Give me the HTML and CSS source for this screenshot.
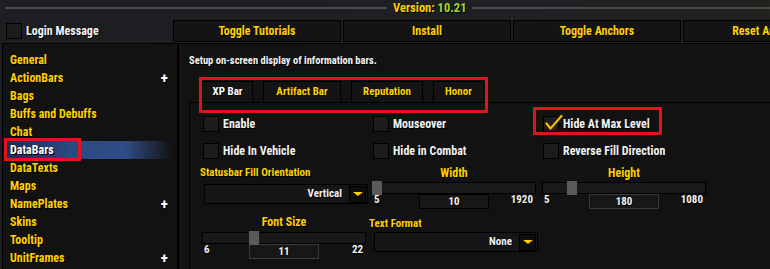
FILE: index.html
```html
<!DOCTYPE html>
<html>
<head>
<meta charset="utf-8">
<link rel="stylesheet" href="styles.css">
</head>
<body>
<div class="titlebar">
  <span class="tline tline-left"></span>
  <span class="version">Version: <span class="ver-num">10.21</span></span>
  <span class="tline tline-right"></span>
</div>
<div class="toolbar">
  <div class="login"><span class="cb"></span><span>Login Message</span></div>
  <div class="btn">Toggle Tutorials</div>
  <div class="btn">Install</div>
  <div class="btn">Toggle Anchors</div>
  <div class="btn">Reset Anchors</div>
</div>
<div class="main">
  <nav class="sidebar">
    <div class="nav-item">General</div>
    <div class="nav-item">ActionBars<span class="plus">+</span></div>
    <div class="nav-item">Bags</div>
    <div class="nav-item">Buffs and Debuffs</div>
    <div class="nav-item">Chat</div>
    <div class="nav-item active">DataBars<span class="redbox redbox-nav"></span></div>
    <div class="nav-item">DataTexts</div>
    <div class="nav-item">Maps</div>
    <div class="nav-item">NamePlates<span class="plus">+</span></div>
    <div class="nav-item">Skins</div>
    <div class="nav-item">Tooltip</div>
    <div class="nav-item">UnitFrames<span class="plus">+</span></div>
  </nav>
  <section class="content">
    <div class="desc">Setup on-screen display of information bars.</div>
    <div class="tabs">
      <div class="tab tab-xp selected">XP Bar</div>
      <div class="tab tab-artifact">Artifact Bar</div>
      <div class="tab tab-rep">Reputation</div>
      <div class="tab tab-honor">Honor</div>
      <span class="redbox redbox-tabs"></span>
    </div>
    <div class="panel">
      <div class="checks">
        <div class="check"><span class="cb"></span>Enable</div>
        <div class="check"><span class="cb"></span>Mouseover</div>
        <div class="check"><span class="cb checked"><svg class="tick" viewBox="0 0 20 18" width="20" height="18"><path d="M2.5 8.5 L6.5 13.5 L17.5 1" fill="none" stroke="#5a4600" stroke-width="3.2" stroke-linecap="round" stroke-linejoin="round"/><path d="M2.5 8.5 L6.5 13.5 L17.5 1" fill="none" stroke="#ffd100" stroke-width="1.8" stroke-linecap="round" stroke-linejoin="round"/></svg></span>Hide At Max Level<span class="redbox redbox-max"></span></div>
        <div class="check"><span class="cb"></span>Hide In Vehicle</div>
        <div class="check"><span class="cb"></span>Hide in Combat</div>
        <div class="check"><span class="cb"></span>Reverse Fill Direction</div>
      </div>
      <div class="widgets row3">
        <div class="dd-widget">
          <div class="glabel">Statusbar Fill Orientation</div>
          <div class="dropdown"><span>Vertical</span><span class="dd-btn"><span class="arrow"></span></span></div>
        </div>
        <div class="slider">
          <div class="slabel">Width</div>
          <div class="track"><span class="thumb" style="left:-1px"></span></div>
          <div class="svals"><span class="smin">5</span><span class="sbox">10</span><span class="smax">1920</span></div>
        </div>
        <div class="slider">
          <div class="slabel">Height</div>
          <div class="track"><span class="thumb" style="left:24px"></span></div>
          <div class="svals"><span class="smin">5</span><span class="sbox hl">180</span><span class="smax">1080</span></div>
        </div>
      </div>
      <div class="widgets row4">
        <div class="slider">
          <div class="slabel">Font Size</div>
          <div class="track"><span class="thumb" style="left:46px"></span></div>
          <div class="svals"><span class="smin">6</span><span class="sbox hl">11</span><span class="smax">22</span></div>
        </div>
        <div class="dd-widget tf">
          <div class="glabel">Text Format</div>
          <div class="dropdown"><span>None</span><span class="dd-btn"><span class="arrow"></span></span></div>
        </div>
      </div>
    </div>
  </section>
</div>
</body>
</html>
```
FILE: styles.css
```css
* { box-sizing: border-box; }
html, body { margin: 0; padding: 0; }
body {
  width: 770px;
  height: 269px;
  overflow: hidden;
  background: linear-gradient(90deg, #1c1e21 0%, #1e2023 70%, #24221f 100%);
  font-family: "Roboto", "Open Sans", "DejaVu Sans Condensed", sans-serif;
  font-stretch: 75%;
  font-weight: 700;
  font-size: 12px;
  line-height: 14px;
  color: #f2f2f2;
  text-shadow: 1px 1px 0 #000;
}

.titlebar {
  height: 16px;
  display: flex;
  align-items: center;
  padding-left: 5px;
}
.tline { height: 2px; background: #4a4b4e; }
.tline-left { width: 382px; flex: none; }
.tline-right { flex: 1; }
.version { margin: 0 6px; color: #ffd100; white-space: nowrap; font-size: 12.5px; }
.ver-num { color: #9ddc2a; }

.toolbar {
  display: flex;
  height: 22px;
  margin-top: 4px;
  padding-left: 6px;
  overflow: hidden;
}
.login {
  width: 167px;
  flex: none;
  display: flex;
  align-items: center;
  gap: 4px;
  color: #f2f2f2;
  font-size: 12px;
}
.cb {
  width: 16px;
  height: 16px;
  flex: none;
  background: #1c1c1c;
  border: 1px solid #000;
  position: relative;
}
.btn {
  width: 168px;
  height: 22px;
  flex: none;
  margin-right: 2px;
  background: #141414;
  border: 1px solid #000;
  color: #ffd100;
  font-size: 12px;
  display: flex;
  align-items: center;
  justify-content: center;
  white-space: nowrap;
}

.main {
  display: flex;
  margin-top: 1px;
  height: 230px;
}
.sidebar {
  margin-left: 2px;
  width: 176px;
  flex: none;
  border: 1px solid #000;
  background: #121212;
  padding-top: 7px;
}
.nav-item {
  position: relative;
  height: 18px;
  margin-left: 1px;
  padding: 0 9px 0 6px;
  display: flex;
  align-items: center;
  justify-content: space-between;
  color: #ffd100;
  font-size: 12px;
}
.nav-item.active {
  color: #fff;
  background: linear-gradient(90deg, #1b2c4e 0%, #2c4a82 40%, #2f4d86 70%, rgba(40, 66, 112, 0) 97%);
}
.plus { color: #fff; font-size: 15px; }

.redbox {
  position: absolute;
  border: 3px solid #e3121b;
  pointer-events: none;
}
.redbox-nav { left: 0; top: -3px; width: 77px; height: 23px; }
.redbox-tabs { left: -3px; top: -4px; width: 289px; height: 36px; }
.redbox-max { left: -10px; top: -9px; width: 129px; height: 28px; }

.content {
  flex: 1;
  border: 1px solid #000;
  border-right: none;
  background: #121212;
  padding: 10px 0 0 10px;
}
.desc { color: #f2f2f2; font-size: 10.5px; }

.tabs {
  position: relative;
  display: flex;
  gap: 10px;
  margin: 13px 0 0 13px;
  height: 21px;
}
.tab {
  height: 21px;
  border: 1px solid #000;
  border-bottom: none;
  background: #141414;
  color: #ffd100;
  font-size: 11px;
  display: flex;
  align-items: center;
  justify-content: center;
}
.tab.selected { color: #fff; }
.tab-xp { width: 51px; }
.tab-artifact { width: 78px; }
.tab-rep { width: 72px; }
.tab-honor { width: 51px; }

.panel {
  border: 1px solid #000;
  border-right: none;
  background: #121212;
  height: 170px;
  padding: 13px 0 0 12px;
}
.checks {
  display: grid;
  grid-template-columns: repeat(3, 170px);
  row-gap: 11px;
}
.check {
  position: relative;
  display: flex;
  align-items: center;
  gap: 4px;
  height: 16px;
  margin-left: 1px;
  color: #f2f2f2;
  font-size: 12px;
}
.tick {
  position: absolute;
  left: 0;
  top: -2px;
  overflow: visible;
}

.widgets {
  display: grid;
  grid-template-columns: repeat(3, 170px);
}
.row3 { margin-top: 7px; }
.row4 { margin-top: 6px; }

.glabel {
  color: #ffd100;
  margin-left: -2px;
  font-size: 11px;
}
.dropdown {
  margin: 4px 0 0 2px;
  width: 164px;
  height: 20px;
  background: #161616;
  border: 1px solid #000;
  display: flex;
  align-items: center;
  justify-content: flex-end;
  padding-right: 1px;
  color: #f2f2f2;
  font-size: 11px;
}
.dd-btn {
  width: 17px;
  height: 17px;
  margin-left: 7px;
  background: #0e0e0e;
  border: 1px solid #000;
  display: flex;
  align-items: center;
  justify-content: center;
}
.arrow {
  width: 0;
  height: 0;
  border-left: 5px solid transparent;
  border-right: 5px solid transparent;
  border-top: 4px solid #ffd100;
}
.tf .glabel { margin-left: -3px; padding-top: 2px; }
.tf .dropdown { margin-top: 1px; }

.slider { width: 164px; }
.slabel { text-align: center; color: #ffd100; font-size: 12px; }
.track {
  position: relative;
  margin-top: 2px;
  height: 12px;
  background: #191919;
  border: 1px solid #000;
}
.row4 .track { margin-top: 3px; }
.thumb {
  position: absolute;
  top: -2px;
  width: 10px;
  height: 14px;
  background: #5a5a5a;
}
.svals {
  display: grid;
  grid-template-columns: 1fr 70px 1fr;
  height: 15px;
  color: #f2f2f2;
  font-size: 11px;
}
.smin { padding-left: 2px; line-height: 12px; }
.smax { text-align: right; padding-right: 3px; line-height: 12px; }
.sbox {
  height: 15px;
  background: #171717;
  border: 1px solid #000;
  text-align: center;
  line-height: 13px;
}
.sbox.hl { border-color: #3a3a3a; }
```
